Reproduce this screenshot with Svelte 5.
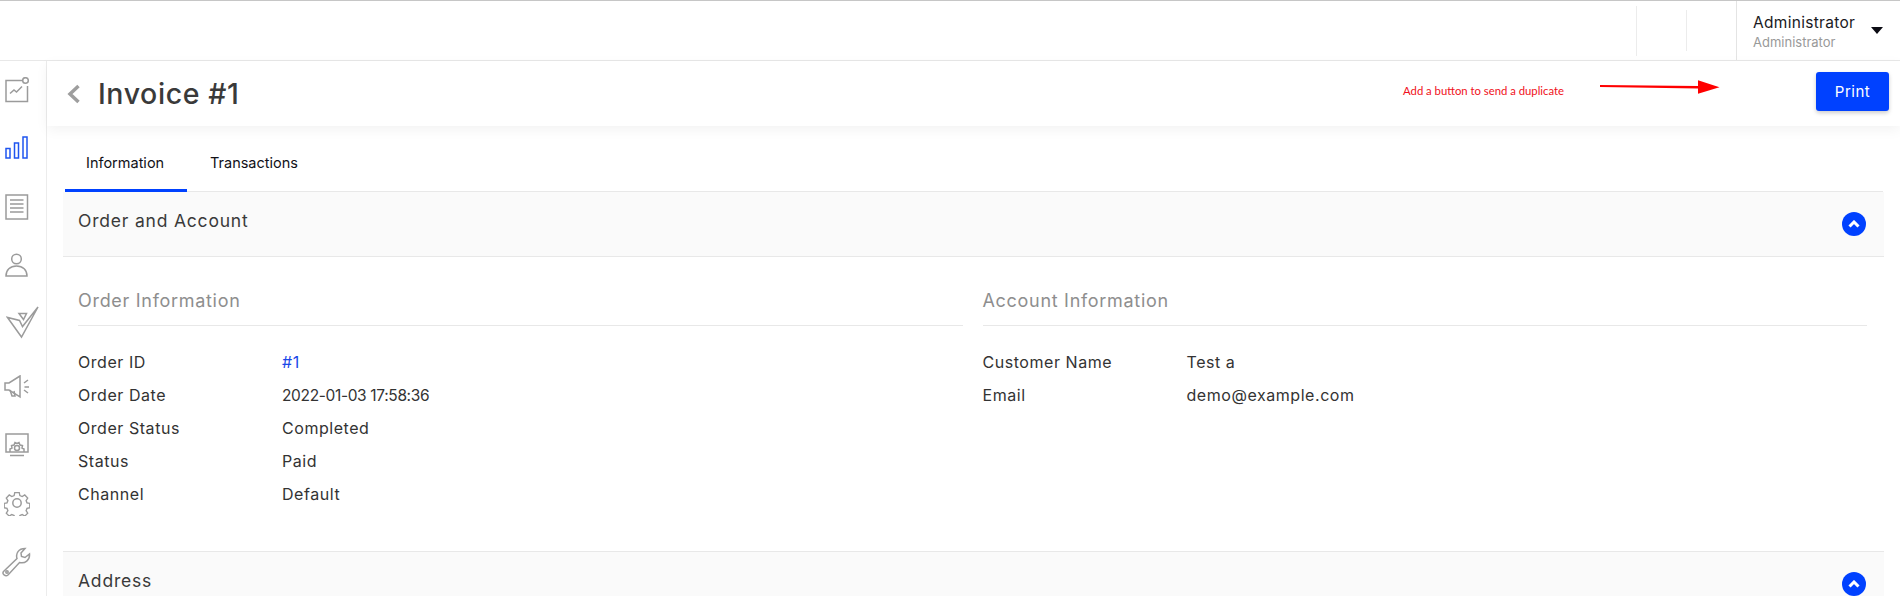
<script>
	const orderRows = [
		{ label: 'Order ID', value: '#1', link: true },
		{ label: 'Order Date', value: '2022-01-03 17:58:36', num: true },
		{ label: 'Order Status', value: 'Completed' },
		{ label: 'Status', value: 'Paid' },
		{ label: 'Channel', value: 'Default' }
	];
	const accountRows = [
		{ label: 'Customer Name', value: 'Test a' },
		{ label: 'Email', value: 'demo@example.com' }
	];
</script>

<div class="page">
	<header class="topbar">
		<span class="divider d1"></span>
		<span class="gap"></span>
		<span class="divider d2"></span>
		<span class="gap"></span>
		<div class="user">
			<div class="names">
				<div class="name">Administrator</div>
				<div class="role">Administrator</div>
			</div>
			<span class="caret"></span>
		</div>
	</header>

	<div class="body">
		<nav class="side">
			<div class="cell">
				<svg width="24" height="26" viewBox="0 0 24 26" class="ic">
					<path d="M18 3.500H1v21h21.500V9" />
					<circle cx="20.500" cy="3.500" r="2.800" />
					<path d="M5 16.500l4-3.500 2.500 2 5.500-5.500" />
				</svg>
			</div>
			<div class="cell">
				<svg width="24" height="24" viewBox="0 0 24 24" class="ic active">
					<rect x="1" y="12.500" width="4" height="9.500" />
					<rect x="9.500" y="7" width="4" height="15" />
					<rect x="18" y="1" width="4" height="21" />
				</svg>
			</div>
			<div class="cell">
				<svg width="24" height="26" viewBox="0 0 24 26" class="ic">
					<rect x="1" y="1" width="21.500" height="24" />
					<path d="M5 6h13.500M5 10h13.500M5 14h13.500M5 18h13.500" />
				</svg>
			</div>
			<div class="cell">
				<svg width="24" height="24" viewBox="0 0 24 24" class="ic">
					<circle cx="11.500" cy="6" r="4.800" />
					<path d="M1 23c0-6 4-10 10.500-10S22 17 22 23z" />
				</svg>
			</div>
			<div class="cell">
				<svg width="34" height="34" viewBox="0 0 34 34" class="ic big">
					<path d="M1.500 11.500L15.500 31 32 1 16.500 20.500 13.500 14.500z" />
					<path d="M13 7.500h7.500l-3 6z" />
				</svg>
			</div>
			<div class="cell shift">
				<svg width="26" height="24" viewBox="0 0 26 24" class="ic">
					<path d="M16 1L5 8H1v7h4l11 7z" />
					<path d="M6 15l2 6h3l-1-5M20 8l4-3M20.500 12H25M20 15l4 3" />
				</svg>
			</div>
			<div class="cell">
				<svg width="24" height="24" viewBox="0 0 24 24" class="ic">
					<rect x="1" y="1" width="22" height="18" />
					<path d="M5 22.500h14M5 19v-3l2-1-.5-2.500 2.500-.5 1-2.500 2 1 2-1 1 2.500 2.500.5-.5 2.500 2 1v3" />
					<circle cx="12" cy="15" r="2.500" />
				</svg>
			</div>
			<div class="cell">
				<svg width="26" height="26" viewBox="0 0 26 26" class="ic">
					<circle cx="13" cy="13" r="4.200" />
					<path d="M10.500 1.500h5l.7 3.300 2.600 1.100 2.800-1.800 3.300 3.400-1.800 2.800 1 2.500 3.100.7v4.800l-3.100.7-1 2.500 1.800 2.800-3.300 3.300-2.800-1.800-2.600 1.100-.7 3.200h-5l-.7-3.200-2.600-1.100-2.800 1.800-3.300-3.300 1.800-2.800-1-2.500-3.100-.7v-4.800l3.100-.7 1-2.500-1.800-2.800 3.300-3.400 2.800 1.800 2.600-1.100z" transform="translate(1.300 1.300) scale(.9)" />
				</svg>
			</div>
			<div class="cell">
				<svg width="30" height="30" viewBox="0 0 30 30" class="ic">
					<path d="M1.500 24.500L15 11.500c-1.500-5 1.500-10 8-10l-4 4.500 .5 3.500 3.500 1 4.500-3.500c.5 6-4.500 10-10 8.500L6 28c-2.500 2-6.500-1-4.500-3.500z" />
					<circle cx="5" cy="25" r="1.200" />
				</svg>
			</div>
		</nav>

		<main class="content">
			<div class="titlebar">
				<svg class="back" width="14" height="20" viewBox="0 0 14 20">
					<path d="M11.500 2L3 10l8.500 8" />
				</svg>
				<h1>Invoice #1</h1>
				<span class="note">Add a button to send a duplicate</span>
				<svg class="arrow" width="120" height="16" viewBox="0 0 120 16">
					<path d="M0 6L98 7V9.500L0 8z" fill="#ff0000" />
					<path d="M98 1.200l21.500 7-21.500 6.600z" fill="#ff0000" />
				</svg>
				<button class="print">Print</button>
			</div>

			<div class="tabs">
				<span class="tab active">Information</span>
				<span class="tab">Transactions</span>
			</div>

			<section class="acc-head">
				<h2>Order and Account</h2>
				<span class="toggle">
					<svg width="12" height="8" viewBox="0 0 12 8"><path d="M1.500 6.500L6 2l4.500 4.500" /></svg>
				</span>
			</section>

			<div class="cols">
				<div class="col">
					<h3>Order Information</h3>
					{#each orderRows as row}
						<div class="row">
							<span class="label">{row.label}</span>
							<span class:link={row.link} class:num={row.num}>{row.value}</span>
						</div>
					{/each}
				</div>
				<div class="col">
					<h3>Account Information</h3>
					{#each accountRows as row}
						<div class="row">
							<span class="label">{row.label}</span>
							<span>{row.value}</span>
						</div>
					{/each}
				</div>
			</div>

			<section class="acc-head last">
				<h2>Address</h2>
				<span class="toggle">
					<svg width="12" height="8" viewBox="0 0 12 8"><path d="M1.500 6.500L6 2l4.500 4.500" /></svg>
				</span>
			</section>
		</main>
	</div>
</div>

<style>
	:global(body) {
		margin: 0;
		background: #fff;
		overflow: hidden;
	}

	.page {
		height: 596px;
		overflow: hidden;
		font-family: Inter, 'Open Sans', sans-serif;
		color: #333;
		border-top: 1px solid #c6c6c6;
		box-sizing: border-box;
	}

	.topbar {
		height: 60px;
		box-sizing: border-box;
		border-bottom: 1px solid #e8e8e8;
		display: flex;
		justify-content: flex-end;
		align-items: center;
	}

	.divider {
		width: 1px;
		background: #ececec;
	}

	.d1 {
		height: 50px;
	}

	.d2 {
		height: 41px;
	}

	.gap {
		width: 49px;
	}

	.user {
		width: 164px;
		height: 59px;
		box-sizing: border-box;
		border-left: 1px solid #e4e4e4;
		padding: 13px 0 0 16px;
		display: flex;
		gap: 15px;
	}

	.names {
		width: 103px;
	}

	.name {
		font-size: 15.500px;
		line-height: 18px;
		color: #1a1a22;
		letter-spacing: 0.3px;
	}

	.role {
		font-size: 13px;
		line-height: 18px;
		margin-top: 1px;
		color: #999;
	}

	.caret {
		margin-top: 13px;
		width: 0;
		height: 0;
		border-left: 6.500px solid transparent;
		border-right: 6.500px solid transparent;
		border-top: 7px solid #0c0c14;
	}

	.body {
		display: flex;
		height: 535px;
	}

	.side {
		width: 47px;
		flex: none;
		border-right: 1px solid #ececec;
		padding-right: 12px;
		box-sizing: border-box;
	}

	.cell {
		height: 58.300px;
		display: flex;
		align-items: center;
		justify-content: center;
	}

	.cell.shift {
		margin-top: 5px;
	}

	.ic {
		fill: none;
		stroke: #9b9b9b;
		stroke-width: 1.500;
		flex: none;
	}

	.ic.big {
		margin-left: 12px;
	}

	.ic.active {
		stroke: #1f55f0;
	}

	.content {
		flex: 1;
		min-width: 0;
	}

	.titlebar {
		height: 65px;
		display: flex;
		align-items: center;
		padding: 0 11px 0 20px;
		box-shadow: 0 4px 12px rgba(0, 0, 0, 0.05);
		position: relative;
	}

	.back {
		fill: none;
		stroke: #9e9e9e;
		stroke-width: 3.500;
		margin-right: 17px;
	}

	h1 {
		margin: 0;
		font-size: 28.500px;
		font-weight: 500;
		color: #3a3a3a;
		letter-spacing: 0.6px;
		flex: 1;
	}

	.note {
		font-family: Lato, 'Open Sans', sans-serif;
		font-size: 11.300px;
		color: #f01020;
		margin: 0 36px 6px 0;
	}

	.arrow {
		margin: 0 96px 14px 0;
	}

	.print {
		width: 73px;
		height: 39px;
		margin-bottom: 4px;
		border: 0;
		border-radius: 3px;
		background: #0041ff;
		color: #fff;
		font: 400 15px Inter, sans-serif;
		letter-spacing: 0.5px;
		box-shadow: 0 2px 4px rgba(0, 0, 0, 0.2);
	}

	.tabs {
		height: 65px;
		margin: 0 17px 0 18px;
		display: flex;
		gap: 2px;
		border-bottom: 1px solid #e8e8e8;
		box-sizing: content-box;
	}

	.tab {
		height: 66px;
		box-sizing: border-box;
		padding: 28px 21px 0;
		font-size: 14.500px;
		font-weight: 400;
		color: #111118;
	}

	.tab.active {
		width: 122px;
		border-bottom: 3px solid #0041ff;
	}

	.acc-head {
		margin: 0 16px;
		height: 64px;
		background: #fafafa;
		border-bottom: 1px solid #e8e8e8;
		display: flex;
		justify-content: space-between;
		align-items: center;
		padding: 0 15px;
	}

	.acc-head.last {
		border-top: 1px solid #e8e8e8;
	}

	h2 {
		margin: 0 0 7px;
		font-size: 17.500px;
		font-weight: 400;
		color: #3a3a3a;
		letter-spacing: 0.8px;
	}

	.toggle {
		width: 24px;
		height: 24px;
		border-radius: 50%;
		background: #0041ff;
		display: flex;
		align-items: center;
		justify-content: center;
		margin: 0 3px 0 0;
	}

	.toggle svg {
		fill: none;
		stroke: #fff;
		stroke-width: 3;
	}

	.cols {
		display: flex;
		gap: 20px;
		height: 294px;
		margin: 0 33px 0 31px;
	}

	.col {
		flex: 1;
	}

	h3 {
		margin: 0 0 20px;
		height: 69px;
		line-height: 87px;
		box-sizing: border-box;
		border-bottom: 1px solid #e8e8e8;
		font-size: 18px;
		font-weight: 400;
		color: #8e8e8e;
		letter-spacing: 0.7px;
	}

	.row {
		display: flex;
		height: 33px;
		line-height: 33px;
		font-size: 16px;
		color: #333;
		letter-spacing: 0.55px;
	}

	.label {
		width: 204px;
	}

	.num {
		font-size: 15.500px;
		letter-spacing: -0.35px;
	}

	.link {
		color: #1a48e8;
	}
</style>
